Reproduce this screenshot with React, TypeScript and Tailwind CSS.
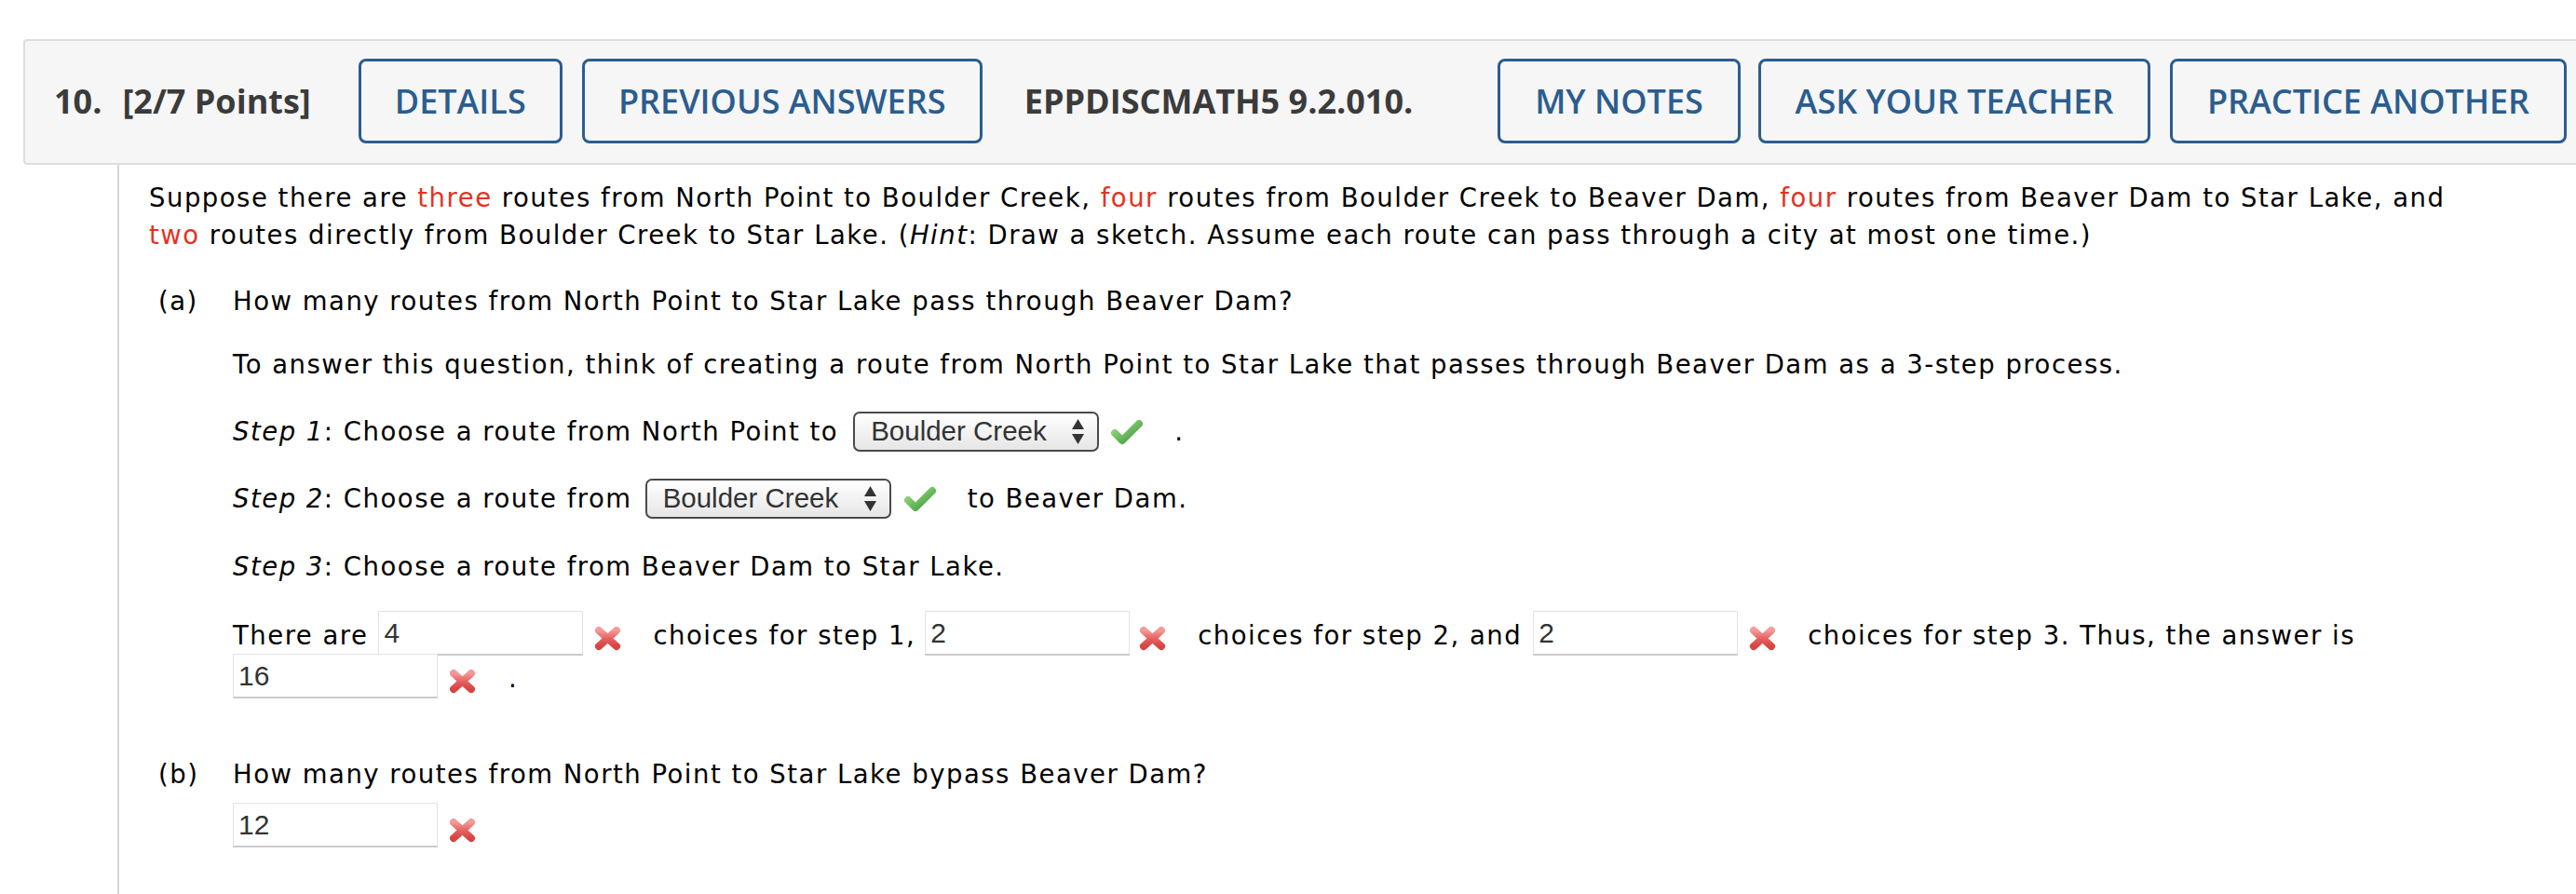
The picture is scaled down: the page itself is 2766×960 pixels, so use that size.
import React from "react";

function Red({ children }: { children: React.ReactNode }) {
  return <span className="text-[#e5321f]">{children}</span>;
}

function Check({ id }: { id: string }) {
  return (
    <svg width="36" height="29" viewBox="0 0 36 29" className="shrink-0">
      <defs>
        <linearGradient id={id} x1="0" y1="0" x2="1" y2="1">
          <stop offset="0" stopColor="#a2d88f" />
          <stop offset="0.5" stopColor="#6cbb5f" />
          <stop offset="1" stopColor="#3f9a3c" />
        </linearGradient>
      </defs>
      <polyline
        points="5,16 13,24 31,6"
        fill="none"
        stroke={`url(#${id})`}
        strokeWidth="8"
        strokeLinecap="round"
        strokeLinejoin="round"
      />
    </svg>
  );
}

function Cross({ id }: { id: string }) {
  return (
    <svg width="31" height="29" viewBox="0 0 31 29" className="shrink-0">
      <defs>
        <linearGradient id={id} x1="0" y1="0" x2="0" y2="1">
          <stop offset="0" stopColor="#f39a9a" />
          <stop offset="0.5" stopColor="#e66262" />
          <stop offset="1" stopColor="#d64444" />
        </linearGradient>
      </defs>
      <g stroke={`url(#${id})`} strokeWidth="8" strokeLinecap="round">
        <line x1="6" y1="6" x2="25" y2="23" />
        <line x1="25" y1="6" x2="6" y2="23" />
      </g>
    </svg>
  );
}

function Select() {
  return (
    <div className="shrink-0 w-[264px] h-[43px] rounded-[7px] border-2 border-[#4a4a4a] bg-gradient-to-b from-[#ffffff] to-[#e6e6e6] flex items-center justify-between pl-[17px] pr-[14px] [font-family:'Liberation_Sans',Arial,sans-serif] text-[29.5px] leading-none tracking-normal text-[#333]">
      <span>Boulder Creek</span>
      <svg width="13" height="27" viewBox="0 0 13 27">
        <polygon points="6.5,0 13,11 0,11" fill="#333" />
        <polygon points="0,16 13,16 6.5,27" fill="#333" />
      </svg>
    </div>
  );
}

function Input({ value }: { value: string }) {
  return (
    <div className="shrink-0 w-[220px] h-[48px] bg-white border border-[#e3e3e3] border-b-2 border-b-[#cbcbcb] flex items-center pl-[5px] [font-family:'Liberation_Sans',Arial,sans-serif] text-[30px] leading-none tracking-normal text-[#333]">
      {value}
    </div>
  );
}

function Btn({ w, children }: { w: string; children: React.ReactNode }) {
  return (
    <div
      className={`${w} shrink-0 h-[91px] border-[3px] border-[#2b5d90] rounded-[8px] flex items-center justify-center text-[#2b5d8f] font-semibold whitespace-nowrap`}
    >
      {children}
    </div>
  );
}

export default function App() {
  return (
    <div className="w-[2766px] h-[960px] overflow-hidden bg-white">
      <div className="pt-[42px]">
        <div className="ml-[25px] h-[135px] pb-[2px] flex items-center bg-[#f6f6f6] border-2 border-r-0 border-[#dedede] rounded-l-[4px] pr-[10px] [font-family:'Open_Sans',sans-serif] text-[36px] leading-none">
          <span className="ml-[31px] font-bold text-[#3b3b3b] whitespace-nowrap">10.</span>
          <span className="ml-[22px] font-bold text-[#3b3b3b] whitespace-nowrap">[2/7 Points]</span>
          <div className="ml-[51px]">
            <Btn w="w-[219px]">DETAILS</Btn>
          </div>
          <div className="ml-[21px]">
            <Btn w="w-[430px]">PREVIOUS ANSWERS</Btn>
          </div>
          <span className="ml-[45px] font-bold text-[#3b3b3b] whitespace-nowrap">EPPDISCMATH5 9.2.010.</span>
          <div className="ml-auto">
            <Btn w="w-[261px]">MY NOTES</Btn>
          </div>
          <div className="ml-[19px]">
            <Btn w="w-[421px]">ASK YOUR TEACHER</Btn>
          </div>
          <div className="ml-[21px]">
            <Btn w="w-[426px]">PRACTICE ANOTHER</Btn>
          </div>
        </div>
      </div>

      <div className="ml-[126px] h-[783px] border-l-2 border-[#d5d5d5] pl-[32px] pt-[15px] [font-family:'DejaVu_Sans',Verdana,sans-serif] text-[27.5px] leading-[40px] tracking-[1.5px] text-black">
        <div className="whitespace-nowrap">
          Suppose there are <Red>three</Red> routes from North Point to Boulder Creek, <Red>four</Red> routes from
          Boulder Creek to Beaver Dam, <Red>four</Red> routes from Beaver Dam to Star Lake, and
        </div>
        <div className="whitespace-nowrap">
          <Red>two</Red> routes directly from Boulder Creek to Star Lake. (<i>Hint</i>: Draw a sketch. Assume each
          route can pass through a city at most one time.)
        </div>

        <div className="ml-[10px]">
          <div className="mt-[31px] h-[40px] flex items-center whitespace-nowrap">
            <span className="w-[80px] shrink-0">(a)</span>
            <span>How many routes from North Point to Star Lake pass through Beaver Dam?</span>
          </div>

          <div className="ml-[80px]">
            <div className="mt-[28px] h-[40px] flex items-center whitespace-nowrap">
              <span>
                To answer this question, think of creating a route from North Point to Star Lake that passes through
                Beaver Dam as a 3-step process.
              </span>
            </div>

            <div className="mt-[30px] h-[44px] flex items-center whitespace-nowrap">
              <span>
                <i>Step 1</i>: Choose a route from North Point to
              </span>
              <div className="ml-[16px]">
                <Select />
              </div>
              <div className="ml-[12px]">
                <Check id="chk1" />
              </div>
              <span className="ml-[33px]">.</span>
            </div>

            <div className="mt-[28px] h-[44px] flex items-center whitespace-nowrap">
              <span>
                <i>Step 2</i>: Choose a route from
              </span>
              <div className="ml-[14px]">
                <Select />
              </div>
              <div className="ml-[13px]">
                <Check id="chk2" />
              </div>
              <span className="ml-[33px]">to Beaver Dam.</span>
            </div>

            <div className="mt-[31px] h-[40px] flex items-center whitespace-nowrap">
              <span>
                <i>Step 3</i>: Choose a route from Beaver Dam to Star Lake.
              </span>
            </div>

            <div className="mt-[28px] h-[48px] flex items-center whitespace-nowrap">
              <span className="pt-[4px]">There are</span>
              <div className="ml-[11px]">
                <Input value="4" />
              </div>
              <div className="ml-[11px] mt-[10px]">
                <Cross id="x1" />
              </div>
              <span className="ml-[33px] pt-[4px]">choices for step 1,</span>
              <div className="ml-[10px]">
                <Input value="2" />
              </div>
              <div className="ml-[9px] mt-[10px]">
                <Cross id="x2" />
              </div>
              <span className="ml-[33px] pt-[4px]">choices for step 2, and</span>
              <div className="ml-[12px]">
                <Input value="2" />
              </div>
              <div className="ml-[11px] mt-[10px]">
                <Cross id="x3" />
              </div>
              <span className="ml-[33px] pt-[4px]">choices for step 3. Thus, the answer is</span>
            </div>

            <div className="mt-[-2px] h-[48px] flex items-center whitespace-nowrap">
              <Input value="16" />
              <div className="ml-[11px] mt-[10px]">
                <Cross id="x4" />
              </div>
              <span className="ml-[34px] pt-[4px]">.</span>
            </div>
          </div>

          <div className="mt-[61px] h-[40px] flex items-center whitespace-nowrap">
            <span className="w-[80px] shrink-0">(b)</span>
            <span>How many routes from North Point to Star Lake bypass Beaver Dam?</span>
          </div>
          <div className="ml-[80px] mt-[11px] h-[48px] flex items-center">
            <Input value="12" />
            <div className="ml-[11px] mt-[10px]">
              <Cross id="x5" />
            </div>
          </div>
        </div>
      </div>
    </div>
  );
}
